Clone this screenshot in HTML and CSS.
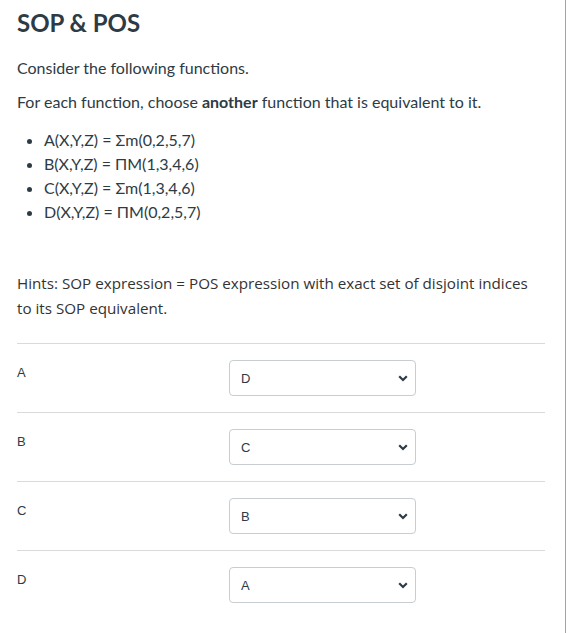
FILE: index.html
```html
<!DOCTYPE html>
<html lang="en">
<head>
    <meta charset="UTF-8">
    <title>SOP &amp; POS</title>
    <meta name="viewport" content="width=device-width, initial-scale=1">
    <link rel="stylesheet" href="styles.css">
</head>
<body>
    <div class="page">
        <h2 class="title">SOP &amp; POS</h2>
        <p class="text">Consider the following functions.</p>
        <p class="text">For each function, choose <strong>another</strong> function that is equivalent to it.</p>
        <ul class="funcs">
            <li>A(X,Y,Z) = &Sigma;m(0,2,5,7)</li>
            <li>B(X,Y,Z) = &Pi;M(1,3,4,6)</li>
            <li>C(X,Y,Z) = &Sigma;m(1,3,4,6)</li>
            <li>D(X,Y,Z) = &Pi;M(0,2,5,7)</li>
        </ul>
        <p class="hint">Hints: SOP expression = POS expression with exact set of disjoint indices to its SOP equivalent.</p>

        <div class="answers">
            <div class="row">
                <div class="label">A</div>
                <div class="pick">
                    <select><option>D</option><option>A</option><option>B</option><option>C</option></select>
                    <svg class="chev" width="10" height="7" viewBox="0 0 10 7"><path d="M1.2 1.3 L5 5 L8.8 1.3" fill="none" stroke="#2d3b45" stroke-width="2.2"/></svg>
                </div>
            </div>
            <div class="row">
                <div class="label">B</div>
                <div class="pick">
                    <select><option>C</option><option>A</option><option>B</option><option>D</option></select>
                    <svg class="chev" width="10" height="7" viewBox="0 0 10 7"><path d="M1.2 1.3 L5 5 L8.8 1.3" fill="none" stroke="#2d3b45" stroke-width="2.2"/></svg>
                </div>
            </div>
            <div class="row">
                <div class="label">C</div>
                <div class="pick">
                    <select><option>B</option><option>A</option><option>C</option><option>D</option></select>
                    <svg class="chev" width="10" height="7" viewBox="0 0 10 7"><path d="M1.2 1.3 L5 5 L8.8 1.3" fill="none" stroke="#2d3b45" stroke-width="2.2"/></svg>
                </div>
            </div>
            <div class="row">
                <div class="label">D</div>
                <div class="pick">
                    <select><option>A</option><option>B</option><option>C</option><option>D</option></select>
                    <svg class="chev" width="10" height="7" viewBox="0 0 10 7"><path d="M1.2 1.3 L5 5 L8.8 1.3" fill="none" stroke="#2d3b45" stroke-width="2.2"/></svg>
                </div>
            </div>
        </div>
    </div>
</body>
</html>
```

FILE: styles.css
```css
body {
    margin: 0;
    padding: 0;
    background: #fff;
    font-family: Lato, "Open Sans", sans-serif;
    color: #2d3b45;
}
.page {
    width: 566px;
    min-height: 633px;
    box-sizing: border-box;
    padding: 0 20px 0 17px;
    border-right: 1px solid #a3a3a3;
    overflow: hidden;
}
.title {
    margin: 8px 0 0 0;
    font-size: 24px;
    line-height: 30px;
    font-weight: bold;
}
.text {
    margin: 18px 0 0 0;
    font-size: 16px;
    line-height: 24px;
}
.text + .text {
    margin-top: 10px;
}
.funcs {
    margin: 14px 0 0 0;
    padding-left: 27px;
    font-size: 16px;
    line-height: 24px;
}
.hint {
    margin: 47px 0 0 0;
    padding-right: 8px;
    font-family: "Open Sans", sans-serif;
    font-size: 15.2px;
    line-height: 25px;
    color: #333;
}
.answers {
    margin-top: 22px;
}
.row {
    display: grid;
    grid-template-columns: 212px 187px;
    padding: 16px 0;
    border-top: 1px solid #dadada;
}
.label {
    font-family: "Liberation Sans", Arial, sans-serif;
    font-size: 13px;
    line-height: 20px;
    padding-top: 3px;
}
.pick {
    position: relative;
}
.pick select {
    width: 187px;
    height: 36px;
    padding: 0 24px 0 11px;
    border: 1px solid #c7cdd1;
    border-radius: 4px;
    background: #fff;
    color: #2d3b45;
    font-family: "Liberation Sans", Arial, sans-serif;
    font-size: 13px;
    appearance: none;
    -webkit-appearance: none;
    outline: none;
}
.chev {
    position: absolute;
    right: 8px;
    top: 15px;
    pointer-events: none;
}
```
